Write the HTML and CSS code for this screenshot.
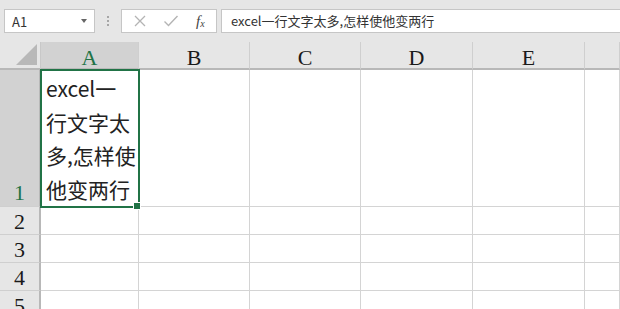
FILE: index.html
```html
<!DOCTYPE html>
<html lang="zh-CN">
<head>
  <meta charset="UTF-8">
  <meta name="viewport" content="width=device-width, initial-scale=1.0">
  <title>excel</title>
  <link rel="stylesheet" href="styles.css">
</head>
<body>
  <div class="toolbar">
    <div class="name-box">
      <span>A1</span>
      <span class="drop"></span>
    </div>
    <div class="dots"><i></i><i></i><i></i></div>
    <div class="fx-buttons">
      <svg class="ico" width="14" height="14" viewBox="0 0 14 14"><path d="M2 2 L12 12 M12 2 L2 12" stroke="#b4b4b4" stroke-width="1.3" fill="none"/></svg>
      <svg class="ico" width="16" height="14" viewBox="0 0 16 14"><path d="M1.5 7.5 L5.5 11.5 L14.5 2" stroke="#b4b4b4" stroke-width="1.4" fill="none"/></svg>
      <span class="fx">f<sub>x</sub></span>
    </div>
    <div class="formula">excel一行文字太多,怎样使他变两行</div>
  </div>

  <div class="sheet">
    <div class="corner"><div class="tri"></div></div>
    <div class="col-head active">A</div>
    <div class="col-head">B</div>
    <div class="col-head">C</div>
    <div class="col-head">D</div>
    <div class="col-head">E</div>
    <div class="col-head"></div>

    <div class="row-head active tall">1</div>
    <div class="cell selected">excel一<br>行文字太<br>多,怎样使<br>他变两行</div>
    <div class="cell"></div><div class="cell"></div><div class="cell"></div><div class="cell"></div><div class="cell"></div>

    <div class="row-head">2</div>
    <div class="cell"></div><div class="cell"></div><div class="cell"></div><div class="cell"></div><div class="cell"></div><div class="cell"></div>

    <div class="row-head">3</div>
    <div class="cell"></div><div class="cell"></div><div class="cell"></div><div class="cell"></div><div class="cell"></div><div class="cell"></div>

    <div class="row-head">4</div>
    <div class="cell"></div><div class="cell"></div><div class="cell"></div><div class="cell"></div><div class="cell"></div><div class="cell"></div>

    <div class="row-head">5</div>
    <div class="cell"></div><div class="cell"></div><div class="cell"></div><div class="cell"></div><div class="cell"></div><div class="cell"></div>
  </div>
</body>
</html>
```

FILE: styles.css
```css
* {
  box-sizing: border-box;
}

body {
  margin: 0;
  width: 620px;
  height: 309px;
  overflow: hidden;
  background: #fff;
  font-family: "Noto Sans CJK SC", "Noto Sans", sans-serif;
}

.toolbar {
  display: flex;
  align-items: center;
  height: 42px;
  padding-left: 4px;
  background: #e6e6e6;
}

.name-box {
  display: flex;
  align-items: center;
  justify-content: space-between;
  width: 91px;
  height: 24px;
  padding: 0 7px 0 7px;
  background: #fff;
  border: 1px solid #c6c6c6;
  font-size: 13px;
  color: #333;
}

.drop {
  width: 0;
  height: 0;
  border-left: 3.5px solid transparent;
  border-right: 3.5px solid transparent;
  border-top: 4px solid #666;
}

.dots {
  display: flex;
  flex-direction: column;
  gap: 2px;
  margin: 0 12px 0 12px;
}

.dots i {
  display: block;
  width: 2px;
  height: 2px;
  background: #a6a6a6;
}

.fx-buttons {
  display: flex;
  align-items: center;
  width: 96px;
  height: 24px;
  padding-left: 11px;
  background: #fff;
  border: 1px solid #c6c6c6;
}

.fx-buttons .ico {
  margin-right: 16px;
}

.fx {
  font-family: "Liberation Serif", serif;
  font-style: italic;
  font-size: 15px;
  color: #444;
  margin-left: 1px;
}

.fx sub {
  font-size: 10px;
  vertical-align: -1px;
}

.formula {
  flex: 1;
  height: 24px;
  margin-left: 4px;
  padding-left: 9px;
  line-height: 22px;
  background: #fff;
  border: 1px solid #c6c6c6;
  border-right: none;
  font-size: 13px;
  color: #333;
}

.sheet {
  display: grid;
  grid-template-columns: 41px 98px 111px 111px 112px 112px 1fr;
  grid-template-rows: 28px 137px 28px 28px 28px 1fr;
}

.corner {
  display: flex;
  justify-content: flex-end;
  align-items: flex-end;
  padding: 0 3px 3px 0;
  background: #e6e6e6;
  border-right: 1px solid #c8c8c8;
  border-bottom: 2px solid #b8b8b8;
}

.tri {
  width: 21px;
  height: 21px;
  background: #b8b8b8;
  clip-path: polygon(100% 0, 100% 100%, 0 100%);
}

.col-head {
  display: flex;
  justify-content: center;
  align-items: center;
  padding-top: 5px;
  background: #e6e6e6;
  border-right: 1px solid #cfcfcf;
  border-bottom: 2px solid #b8b8b8;
  font-family: "Liberation Serif", serif;
  font-size: 22px;
  color: #1a1a1a;
}

.row-head {
  display: flex;
  justify-content: center;
  align-items: center;
  padding-top: 2px;
  background: #e6e6e6;
  border-right: 2px solid #b8b8b8;
  border-bottom: 1px solid #cfcfcf;
  font-family: "Liberation Serif", serif;
  font-size: 22px;
  color: #1a1a1a;
}

.row-head.tall {
  align-items: flex-end;
  padding-bottom: 0;
}

.col-head.active,
.row-head.active {
  background: #d2d2d2;
  color: #217346;
}

.cell {
  border-right: 1px solid #d4d4d4;
  border-bottom: 1px solid #d4d4d4;
}

.selected {
  position: relative;
  padding: 2px 0 0 5px;
  font-size: 21px;
  line-height: 33.5px;
  color: #222;
  outline: 2px solid #217346;
  outline-offset: -1px;
}

.selected::after {
  content: "";
  position: absolute;
  right: -3px;
  bottom: -4px;
  width: 6px;
  height: 6px;
  background: #217346;
  border: 1px solid #fff;
}
```
